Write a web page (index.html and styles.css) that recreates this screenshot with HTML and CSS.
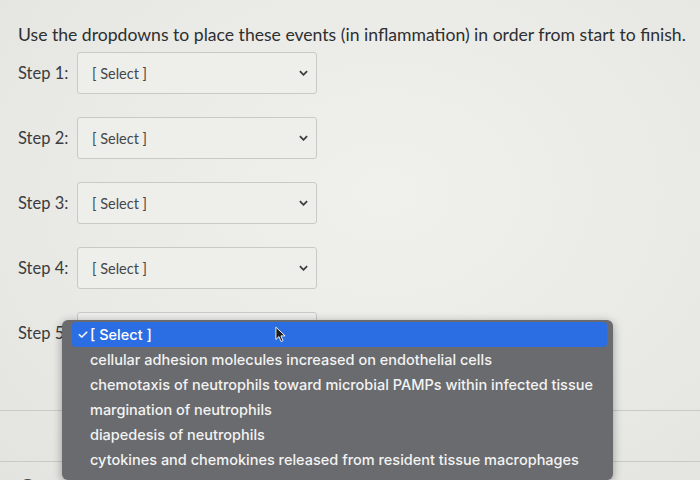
FILE: index.html
```html
<!DOCTYPE html>
<html lang="en">
<head>
<meta charset="utf-8">
<title>Question 3</title>
<link rel="stylesheet" href="styles.css">
</head>
<body>
<main class="quiz">
  <p class="prompt">Use the dropdowns to place these events (in inflammation) in order from start to finish.</p>

  <div class="step">
    <span class="label">Step 1:</span>
    <div class="select"><span>[ Select ]</span><svg class="chev" viewBox="0 0 10 6"><path d="M1 1l4 4 4-4"/></svg></div>
  </div>
  <div class="step">
    <span class="label">Step 2:</span>
    <div class="select"><span>[ Select ]</span><svg class="chev" viewBox="0 0 10 6"><path d="M1 1l4 4 4-4"/></svg></div>
  </div>
  <div class="step">
    <span class="label">Step 3:</span>
    <div class="select"><span>[ Select ]</span><svg class="chev" viewBox="0 0 10 6"><path d="M1 1l4 4 4-4"/></svg></div>
  </div>
  <div class="step">
    <span class="label">Step 4:</span>
    <div class="select"><span>[ Select ]</span><svg class="chev" viewBox="0 0 10 6"><path d="M1 1l4 4 4-4"/></svg></div>
  </div>
  <div class="step step-open">
    <span class="label">Step 5:</span>
    <div class="select"><span>[ Select ]</span><svg class="chev" viewBox="0 0 10 6"><path d="M1 1l4 4 4-4"/></svg></div>

    <ul class="menu">
      <li class="option active"><span class="tick">✓</span>[ Select ]</li>
      <li class="option">cellular adhesion molecules increased on endothelial cells</li>
      <li class="option">chemotaxis of neutrophils toward microbial PAMPs within infected tissue</li>
      <li class="option">margination of neutrophils</li>
      <li class="option">diapedesis of neutrophils</li>
      <li class="option">cytokines and chemokines released from resident tissue macrophages</li>
    </ul>
    <svg class="pointer" viewBox="0 0 12 18"><path d="M1 1v13.5l3.3-3.2 2.4 5.4 2.1-.9-2.3-5.3H11z"/></svg>
  </div>

  <hr class="rule">
  <hr class="rule rule-low">
  <h2 class="next">Question 4</h2>
</main>
</body>
</html>
```

FILE: styles.css
```css
html, body {
  margin: 0;
  height: 100%;
  overflow: hidden;
}

body {
  background: radial-gradient(ellipse at 55% 40%, #f0f0ed 0%, #e9e9e6 60%, #e3e3df 100%);
  font-family: Lato, "Liberation Sans", sans-serif;
  color: #2f3133;
}

.quiz {
  padding: 24px 0 0 18px;
}

.prompt {
  margin: 0 0 6px;
  font-size: 17.6px;
  line-height: 22px;
  white-space: nowrap;
  color: #2d2f31;
}

.step {
  display: flex;
  align-items: center;
  gap: 6px;
  margin-bottom: 23px;
}

.label {
  font-size: 16.5px;
  color: #3a3c3e;
  width: 53px;
}

.select {
  box-sizing: border-box;
  width: 240px;
  height: 42px;
  display: flex;
  align-items: center;
  justify-content: space-between;
  padding: 0 8px 0 14px;
  border: 1px solid #c9c9c6;
  border-radius: 3px;
  background: #eeeeeb;
  font-size: 14.5px;
  color: #44474a;
}

.chev {
  width: 9px;
  height: 6px;
  fill: none;
  stroke: #3b3d40;
  stroke-width: 2;
}

.step-open {
  position: relative;
}

.menu {
  position: absolute;
  left: 44px;
  top: 8px;
  width: 551px;
  margin: 0;
  padding: 2px 6px 8px 10px;
  list-style: none;
  box-sizing: border-box;
  background: #6a6b6e;
  border-radius: 6px;
  box-shadow: 0 2px 10px rgba(0, 0, 0, 0.35);
  font-family: Inter, "Liberation Sans", sans-serif;
  font-size: 14.5px;
  font-weight: 500;
  color: #f3f3f3;
  z-index: 2;
}

.option {
  height: 25px;
  line-height: 25px;
  padding-left: 18px;
  white-space: nowrap;
}

.option.active {
  position: relative;
  background: #2b6de3;
  border-radius: 4px;
  color: #fff;
}

.tick {
  position: absolute;
  left: 5px;
  font-size: 13px;
}

.pointer {
  position: absolute;
  left: 257px;
  top: 14px;
  width: 11px;
  height: 17px;
  fill: #1d1d1f;
  stroke: #fff;
  stroke-width: 1;
  z-index: 3;
}

.rule {
  border: 0;
  border-top: 1px solid #c9c9c5;
  margin: 0 0 0 -18px;
}

.rule:first-of-type {
  margin-top: 56px;
}

.rule-low {
  margin-top: 50px;
}

.next {
  margin: 10px 0 0;
  font-size: 24px;
  font-weight: 400;
  color: #4a4c4e;
}
```
